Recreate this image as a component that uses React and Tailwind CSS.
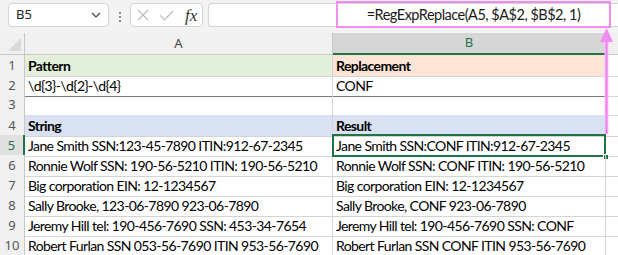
import React from 'react';

const rows = [
  { n: 1, a: 'Pattern', b: 'Replacement', bold: true, aBg: 'bg-[#e2efda]', bBg: 'bg-[#fce4d6]' },
  { n: 2, a: '\\d{3}-\\d{2}-\\d{4}', b: 'CONF', line: true },
  { n: 3, a: '', b: '' },
  { n: 4, a: 'String', b: 'Result', bold: true, aBg: 'bg-[#d9e1f2]', bBg: 'bg-[#d9e1f2]' },
  { n: 5, a: 'Jane Smith SSN:123-45-7890 ITIN:912-67-2345', b: 'Jane Smith SSN:CONF ITIN:912-67-2345', active: true },
  { n: 6, a: 'Ronnie Wolf SSN: 190-56-5210 ITIN: 190-56-5210', b: 'Ronnie Wolf SSN: CONF ITIN: 190-56-5210' },
  { n: 7, a: 'Big corporation EIN: 12-1234567', b: 'Big corporation EIN: 12-1234567' },
  { n: 8, a: 'Sally Brooke, 123-06-7890 923-06-7890', b: 'Sally Brooke, CONF 923-06-7890' },
  { n: 9, a: 'Jeremy Hill tel: 190-456-7690 SSN: 453-34-7654', b: 'Jeremy Hill tel: 190-456-7690 SSN: CONF' },
  { n: 10, a: 'Robert Furlan SSN 053-56-7690 ITIN 953-56-7690', b: 'Robert Furlan SSN CONF ITIN 953-56-7690' },
];

const ui = "font-['Noto_Sans',sans-serif]";
const cell = "font-['Lato',sans-serif] text-[14px] tracking-[-0.6px] text-black";

export default function App() {
  return (
    <div className="relative w-[618px] h-[255px] overflow-hidden bg-white select-none">
      {/* Formula bar */}
      <div className="flex h-[33px] bg-[#f3f3f3] pt-[3px] pl-[8px]">
        <div className="flex h-[24px] w-[101px] items-center justify-between rounded-[4px] border border-[#d4d4d4] bg-white pl-[7px] pr-[7px]">
          <span className={`${ui} text-[13px] text-[#222]`}>B5</span>
          <svg width="10" height="6" viewBox="0 0 10 6">
            <path d="M1 1 L5 5 L9 1" fill="none" stroke="#444" strokeWidth="1.2" />
          </svg>
        </div>
        <div className="flex w-[21px] flex-col items-center justify-center gap-[2px] pb-[2px]">
          <span className="h-[2px] w-[2px] bg-[#8a8a8a]" />
          <span className="h-[2px] w-[2px] bg-[#8a8a8a]" />
          <span className="h-[2px] w-[2px] bg-[#8a8a8a]" />
        </div>
        <div className="flex h-[24px] w-[73px] items-center rounded-[4px] border border-[#d4d4d4] bg-white pl-[6px]">
          <svg width="12" height="12" viewBox="0 0 12 12">
            <path d="M1 1 L11 11 M11 1 L1 11" stroke="#b8b8b8" strokeWidth="1.1" />
          </svg>
          <svg className="ml-[10px]" width="15" height="11" viewBox="0 0 15 11">
            <path d="M1 5 L5.5 10 L14 1" fill="none" stroke="#b8b8b8" strokeWidth="1.1" />
          </svg>
          <span className="ml-[11px] font-['Liberation_Serif',serif] text-[17px] italic leading-none text-[#333]">fx</span>
        </div>
        <div className="relative ml-[5px] h-[24px] flex-1 rounded-l-[4px] border border-r-0 border-[#d4d4d4] bg-white">
          <div className="absolute left-[127px] top-[-3px] flex h-[27px] w-[275px] items-center justify-center border-2 border-[#f28cf2]">
            <span className="font-['Lato',sans-serif] text-[14.5px] tracking-[-0.5px] text-[#1a1a1a]">=RegExpReplace(A5, $A$2, $B$2, 1)</span>
          </div>
        </div>
      </div>

      {/* Column headers */}
      <div className={`grid h-[22px] grid-cols-[25px_308px_273px_12px] bg-[#f0f0f0] ${ui} text-[13px]`}>
        <div className="relative border-b border-r border-[#c8c8c8]">
          <div className="absolute bottom-[3px] right-[3px] h-0 w-0 border-b-[13px] border-l-[13px] border-b-[#d9d9d9] border-l-transparent" />
        </div>
        <div className="flex items-center justify-center border-b border-r border-[#c8c8c8] text-[#444]">A</div>
        <div className="flex items-center justify-center border-b-2 border-r border-b-[#217346] border-r-[#c8c8c8] bg-[#d6d6d6] text-[#217346]">B</div>
        <div className="border-b border-[#c8c8c8]" />
      </div>

      {/* Rows */}
      {rows.map((r) => (
        <div key={r.n} className="grid h-[20px] grid-cols-[25px_308px_273px_12px]">
          <div
            className={`flex items-center justify-center border-b ${ui} text-[13px] ${
              r.active
                ? 'border-r-2 border-b-[#c8c8c8] border-r-[#217346] bg-[#e0e0e0] text-[#217346]'
                : 'border-r border-[#c8c8c8] bg-[#f0f0f0] text-[#555]'
            }`}
          >
            {r.n}
          </div>
          <div
            className={`flex items-center overflow-hidden whitespace-nowrap border-r border-[#d4d4d4] pl-[3px] ${cell} ${
              r.bold ? 'font-bold' : ''
            } ${r.aBg || ''} ${r.line ? 'border-b border-b-[#7a7a7a]' : 'border-b border-b-[#d4d4d4]'}`}
          >
            {r.a}
          </div>
          <div
            className={`relative flex items-center whitespace-nowrap border-r border-[#d4d4d4] pl-[3px] ${cell} ${
              r.bold ? 'font-bold' : ''
            } ${r.bBg || ''} ${r.line ? 'border-b border-b-[#7a7a7a]' : 'border-b border-b-[#d4d4d4]'}`}
          >
            {r.b}
            {r.active && (
              <>
                <div className="absolute inset-[-1px] border-2 border-[#217346]" />
                <div className="absolute bottom-[-4px] right-[-4px] h-[6px] w-[6px] border border-white bg-[#217346]" />
              </>
            )}
          </div>
          <div className="border-b border-[#d4d4d4]" />
        </div>
      ))}

      {/* Arrow annotation */}
      <svg className="pointer-events-none absolute left-0 top-0" width="618" height="255">
        <line x1="606.5" y1="134" x2="606.5" y2="40" stroke="#f9c4f9" strokeWidth="4" />
        <line x1="606.5" y1="134" x2="606.5" y2="40" stroke="#ef80ef" strokeWidth="2" />
        <polygon points="606.5,28 600,42 613,42" fill="#f28cf2" />
      </svg>
    </div>
  );
}
